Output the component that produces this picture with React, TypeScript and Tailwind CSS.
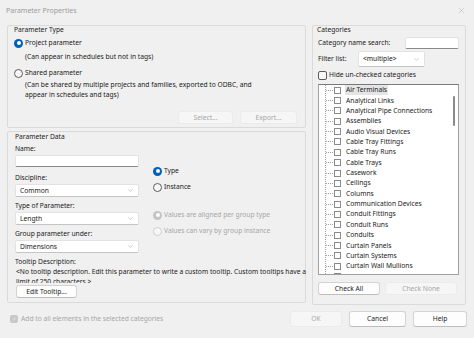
import { ChevronDown, X } from "lucide-react";

const categories = [
  "Air Terminals",
  "Analytical Links",
  "Analytical Pipe Connections",
  "Assemblies",
  "Audio Visual Devices",
  "Cable Tray Fittings",
  "Cable Tray Runs",
  "Cable Trays",
  "Casework",
  "Ceilings",
  "Columns",
  "Communication Devices",
  "Conduit Fittings",
  "Conduit Runs",
  "Conduits",
  "Curtain Panels",
  "Curtain Systems",
  "Curtain Wall Mullions",
  "Data Devices",
];

function Radio({ checked, disabled }: { checked?: boolean; disabled?: boolean }) {
  if (checked) {
    return (
      <span
        className={`flex h-[9px] w-[9px] shrink-0 items-center justify-center rounded-full ${
          disabled ? "bg-[#c4c4c4]" : "bg-[#005fb8]"
        }`}
      >
        <span className="h-[4px] w-[4px] rounded-full bg-white" />
      </span>
    );
  }
  return (
    <span
      className={`h-[9px] w-[9px] shrink-0 rounded-full border bg-[#f7f7f7] ${
        disabled ? "border-[#cfcfcf]" : "border-[#5c5c5c]"
      }`}
    />
  );
}

function Btn({ label, disabled, className }: { label: string; disabled?: boolean; className: string }) {
  return (
    <div
      className={`flex items-center justify-center rounded-[3px] border ${
        disabled
          ? "border-[#ebebeb] bg-[#f6f6f6] text-[#a6a6a6]"
          : "border-[#d3d3d3] border-b-[#bdbdbd] bg-[#fdfdfd] text-[#1a1a1a]"
      } ${className}`}
    >
      {label}
    </div>
  );
}

function Select({ value, className }: { value: string; className: string }) {
  return (
    <div
      className={`flex items-center justify-between rounded-[2px] border border-[#e2e2e2] border-b-[#c4c4c4] bg-white pl-[4px] pr-[4px] ${className}`}
    >
      <span>{value}</span>
      <ChevronDown className="h-[7px] w-[7px] text-[#8a8a8a]" strokeWidth={1.5} />
    </div>
  );
}

export default function App() {
  return (
    <div className="flex h-[338px] w-[474px] flex-col bg-[#f0f0f0] font-['Noto_Sans',sans-serif] text-[6.7px] leading-[10px] text-[#1a1a1a]">
      {/* Title bar */}
      <div className="flex h-[21px] items-center justify-between pl-[6px] pr-[8px]">
        <span className="text-[7px] text-[#9c9c9c]">Parameter Properties</span>
        <X className="h-[9px] w-[9px] text-[#9c9c9c]" strokeWidth={1} />
      </div>

      <div className="mt-[4px] flex gap-[6px] px-[7px]">
        {/* Left column */}
        <div className="flex w-[299px] flex-col gap-[3px]">
          {/* Parameter Type */}
          <div className="flex h-[103px] flex-col rounded-[2px] border border-[#dadada] pl-[6px] pr-[8px]">
            <div className="-mt-px h-[10px]">Parameter Type</div>
            <div className="mt-[3px] flex h-[10px] items-center gap-[2px]">
              <Radio checked />
              <span>Project parameter</span>
            </div>
            <div className="mt-[4px] h-[10px] pl-[11px]">(Can appear in schedules but not in tags)</div>
            <div className="mt-[6px] flex h-[10px] items-center gap-[2px]">
              <Radio />
              <span>Shared parameter</span>
            </div>
            <div className="mt-[2px] pl-[11px]">
              (Can be shared by multiple projects and families, exported to ODBC, and
              <br />
              appear in schedules and tags)
            </div>
            <div className="mt-[11px] flex justify-end gap-[7px]">
              <Btn label="Select..." disabled className="h-[13px] w-[55px]" />
              <Btn label="Export..." disabled className="h-[13px] w-[57px]" />
            </div>
          </div>

          {/* Parameter Data */}
          <div className="flex h-[172px] flex-col rounded-[2px] border border-[#dadada] pl-[7px] pr-[1px]">
            <div className="h-[10px]">Parameter Data</div>
            <div className="flex">
              <div className="flex w-[124px] flex-col">
                <div className="mt-[2px] h-[10px]">Name:</div>
                <div className="mt-[1px] h-[12px] rounded-[2px] border border-[#e2e2e2] border-b-[#8a8a8a] bg-white" />
                <div className="mt-[6px] h-[10px]">Discipline:</div>
                <Select value="Common" className="mt-[1px] h-[13px]" />
                <div className="mt-[4px] h-[10px]">Type of Parameter:</div>
                <Select value="Length" className="mt-[1px] h-[13px]" />
                <div className="mt-[4px] h-[10px]">Group parameter under:</div>
                <Select value="Dimensions" className="mt-[1px] h-[13px]" />
              </div>
              <div className="ml-[14px] flex flex-col">
                <div className="mt-[24px] flex h-[10px] items-center gap-[2px]">
                  <Radio checked />
                  <span>Type</span>
                </div>
                <div className="mt-[6px] flex h-[10px] items-center gap-[2px]">
                  <Radio />
                  <span>Instance</span>
                </div>
                <div className="mt-[18px] flex h-[10px] items-center gap-[2px] text-[#a6a6a6]">
                  <Radio checked disabled />
                  <span>Values are aligned per group type</span>
                </div>
                <div className="mt-[6px] flex h-[10px] items-center gap-[2px] text-[#a6a6a6]">
                  <Radio disabled />
                  <span>Values can vary by group instance</span>
                </div>
              </div>
            </div>
            <div className="mt-[4px] h-[10px]">Tooltip Description:</div>
            <div className="h-[16px] w-[296px] overflow-hidden pl-[1px]">
              &lt;No tooltip description. Edit this parameter to write a custom tooltip. Custom tooltips have a limit of 250 characters.&gt;
            </div>
            <Btn label="Edit Tooltip..." className="ml-[1px] mt-[2px] h-[13px] w-[61px]" />
          </div>
        </div>

        {/* Categories */}
        <div className="flex h-[280px] w-[154px] flex-col rounded-[2px] border border-[#dadada] pl-[4px] pr-[6px]">
          <div className="-mt-px h-[10px]">Categories</div>
          <div className="mt-[2px] flex h-[12px] items-center justify-between pl-[1px]">
            <span>Category name search:</span>
            <div className="h-[12px] w-[54px] rounded-[2px] border border-[#e2e2e2] border-b-[#8a8a8a] bg-white" />
          </div>
          <div className="mt-[2px] flex h-[16px] items-center pl-[1px]">
            <span className="w-[40px]">Filter list:</span>
            <Select value="<multiple>" className="h-[16px] w-[67px]" />
          </div>
          <div className="mt-[3px] flex h-[10px] items-center gap-[2px] pl-[1px]">
            <span className="h-[9px] w-[9px] rounded-[2px] border border-[#5c5c5c] bg-[#f7f7f7]" />
            <span>Hide un-checked categories</span>
          </div>
          <div className="relative ml-[1px] mt-[4px] h-[191px] overflow-hidden border border-[#a0a0a0] border-t-[#7a7a7a] bg-white">
            <div className="absolute bottom-0 left-[6px] top-0 border-l border-dotted border-[#a0a0a0]" />
            <div className="absolute right-[3px] top-[11px] h-[30px] w-[2px] rounded-full bg-[#8a8a8a]" />
            <div className="flex flex-col">
              {categories.map((c, i) => (
                <div key={c} className="flex h-[10.37px] items-center">
                  <span className="ml-[7px] w-[7px] border-t border-dotted border-[#a0a0a0]" />
                  <span className="ml-[1px] h-[7px] w-[7px] border border-[#8a8a8a] bg-white" />
                  <span className={`ml-[4px] px-[1px] leading-[10px] ${i === 0 ? "bg-[#e5e5e5]" : ""}`}>{c}</span>
                </div>
              ))}
            </div>
          </div>
          <div className="ml-[1px] mt-[7px] flex gap-[5px]">
            <Btn label="Check All" className="h-[13px] w-[62px]" />
            <Btn label="Check None" disabled className="h-[13px] w-[72px]" />
          </div>
        </div>
      </div>

      {/* Bottom row */}
      <div className="mt-[6px] flex h-[16px] items-center pl-[10px] pr-[7px]">
        <span className="flex h-[8px] w-[8px] items-center justify-center rounded-[2px] bg-[#c8c8c8] text-[6px] leading-none text-[#e8e8e8]">
          ✓
        </span>
        <span className="ml-[3px] text-[#a6a6a6]">Add to all elements in the selected categories</span>
        <div className="ml-auto flex gap-[7px]">
          <Btn label="OK" disabled className="h-[16px] w-[52px]" />
          <Btn label="Cancel" className="h-[16px] w-[57px]" />
          <Btn label="Help" className="h-[16px] w-[54px]" />
        </div>
      </div>
    </div>
  );
}
